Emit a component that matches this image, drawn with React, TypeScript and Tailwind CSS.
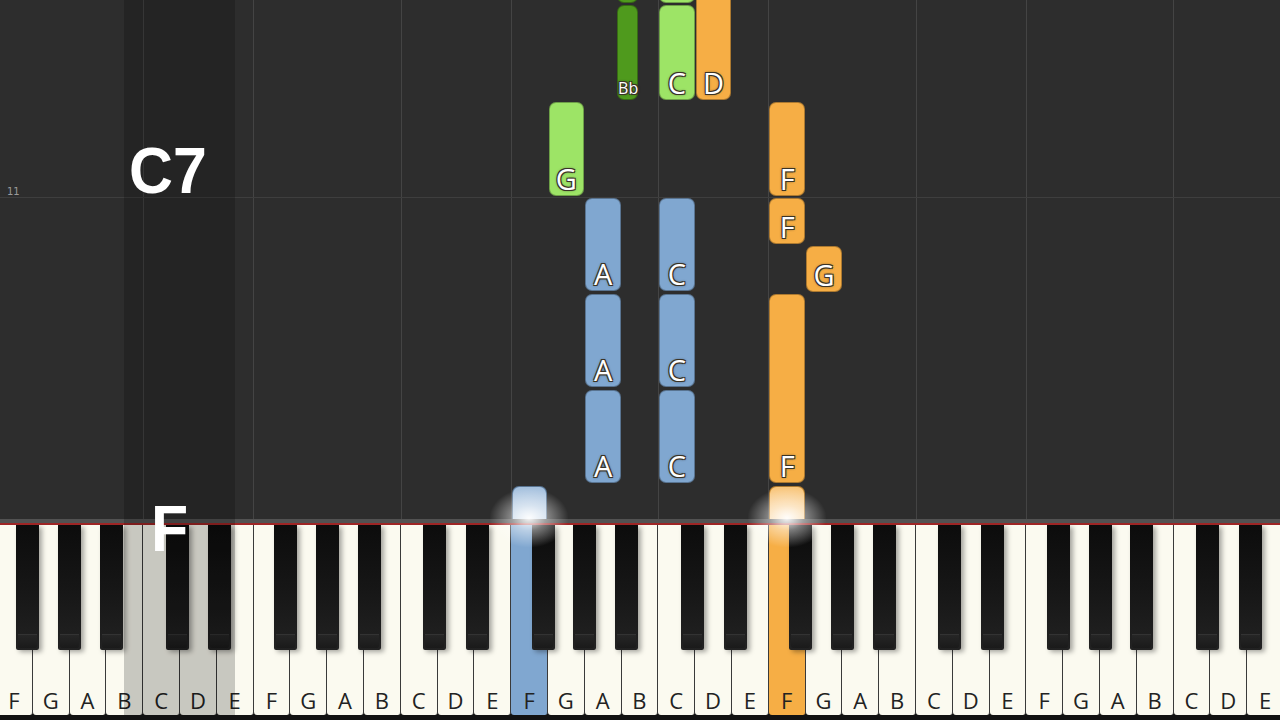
const KW = 36.8;
const X0 = -4;
const keyLeft = (i: number) => X0 + i * KW;

const WHITE = "FGABCDE".repeat(5).split("");
// black key offset from the boundary after a white key
const BLACK_OFFSET: Record<string, number> = { F: -5, G: 0, A: 5, C: -3, D: 3 };

const noteColor = {
  blue: "bg-[#80a7d0]",
  green: "bg-[#9de466]",
  dark: "bg-[#4f9a1d]",
  orange: "bg-[#f6ae45]",
};

type Note = {
  left: number;
  width: number;
  top: number;
  bottom: number;
  color: keyof typeof noteColor;
  label: string;
  small?: boolean;
  glow?: boolean;
};

const white = (k: number, top: number, bottom: number, color: keyof typeof noteColor, label: string, glow?: boolean): Note => ({
  left: keyLeft(k) + 0.5,
  width: KW - 1,
  top,
  bottom,
  color,
  label,
  glow,
});

const bbLeft = keyLeft(17) + 6 - 10.5;

const notes: Note[] = [
  white(15, 102, 196, "green", "G"),
  white(16, 198, 291, "blue", "A"),
  white(16, 294, 387, "blue", "A"),
  white(16, 390, 483, "blue", "A"),
  white(18, 198, 291, "blue", "C"),
  white(18, 294, 387, "blue", "C"),
  white(18, 390, 483, "blue", "C"),
  white(18, 5, 100, "green", "C"),
  white(18, -40, 3, "green", ""),
  white(19, -40, 100, "orange", "D"),
  white(21, 102, 196, "orange", "F"),
  white(21, 198, 244, "orange", "F"),
  white(21, 294, 483, "orange", "F"),
  white(21, 486, 560, "orange", "", true),
  white(22, 246, 292, "orange", "G"),
  white(14, 486, 560, "blue", "", true),
  { left: bbLeft, width: 21, top: 5, bottom: 100, color: "dark", label: "Bb", small: true },
  { left: bbLeft, width: 21, top: -40, bottom: 3, color: "dark", label: "Bb", small: true },
];

const gridX = [143, 253, 401, 511, 658, 768, 916, 1026, 1173];

const outline =
  "[text-shadow:1px_1px_0_#3a3326,-1px_-1px_0_#3a3326,1px_-1px_0_#3a3326,-1px_1px_0_#3a3326,0_0_3px_#222]";

function RollNote({ n }: { n: Note }) {
  return (
    <div
      className={`absolute rounded-[7px] border border-black/30 ${noteColor[n.color]}`}
      style={{ left: n.left, width: n.width, top: n.top, height: n.bottom - n.top }}
    >
      {n.glow && (
        <div className="absolute inset-0 rounded-[7px] bg-gradient-to-b from-white/30 to-white/80" />
      )}
      {n.label && (
        <span
          className={`absolute inset-x-0 text-center font-['Open_Sans',sans-serif] leading-none text-white ${outline} ${
            n.small ? "bottom-[3px] text-[16px]" : "bottom-[2px] text-[29px]"
          }`}
        >
          {n.label}
        </span>
      )}
    </div>
  );
}

function Keyboard() {
  const blacks: { left: number }[] = [];
  WHITE.forEach((w, i) => {
    if (i < WHITE.length - 1 && w in BLACK_OFFSET) {
      blacks.push({ left: keyLeft(i + 1) + BLACK_OFFSET[w] - 11.5 });
    }
  });

  return (
    <div className="relative h-[190px] overflow-hidden bg-[#111]">
      <div className="ml-[-4px] flex h-full">
        {WHITE.map((w, i) => {
          const bg = i === 14 ? "bg-[#80a7d0]" : i === 21 ? "bg-[#f6ae45]" : "bg-[#fbfaf0]";
          return (
            <div
              key={i}
              className={`flex h-full w-[36.8px] shrink-0 items-end justify-center rounded-b-[3px] border-r border-[#3a3a3a] pb-[4px] ${bg}`}
            >
              <span className="font-['Open_Sans',sans-serif] text-[22px] leading-none text-[#222]">{w}</span>
            </div>
          );
        })}
      </div>
      {blacks.map((b, i) => (
        <div
          key={i}
          className="absolute top-0 h-[125px] w-[23px] rounded-b-[2px] bg-gradient-to-b from-[#0c0c0c] via-[#161616] to-[#222] shadow-[3px_2px_5px_rgba(0,0,0,0.35)]"
          style={{ left: b.left }}
        >
          <div className="absolute inset-x-[2px] bottom-[2px] h-[14px] rounded-b-[2px] border-t border-[#333] bg-gradient-to-b from-[#262626] to-[#1a1a1a]" />
        </div>
      ))}
    </div>
  );
}

export default function App() {
  return (
    <div className="relative flex h-[720px] w-[1280px] flex-col overflow-hidden bg-[#2d2d2d]">
      <div className="relative h-[519px] overflow-hidden">
        {gridX.map((x) => (
          <div key={x} className="absolute top-0 h-full w-px bg-[#444]" style={{ left: x }} />
        ))}
        <div className="absolute left-0 top-[197px] h-px w-full bg-[#3e3e3e]" />
        <span className="absolute left-[7px] top-[184px] font-['DejaVu_Sans',sans-serif] text-[10px] text-[#9a9a9a]">11</span>
        {notes.map((n, i) => (
          <RollNote key={i} n={n} />
        ))}
      </div>
      <div className="h-[4px] bg-[#525252]" />
      <div className="h-[2px] bg-[#9e2525]" />
      <Keyboard />
      <div className="h-[5px] bg-[#121212]" />

      {/* highlighted region */}
      <div className="pointer-events-none absolute left-[124px] top-0 h-[715px] w-[111px] bg-black/20" />

      {/* key hit glows */}
      <div className="pointer-events-none absolute left-[489px] top-[488px] h-[60px] w-[80px] bg-[radial-gradient(ellipse_at_center,rgba(255,255,255,0.95)_0%,rgba(255,255,255,0.45)_30%,rgba(255,255,255,0)_70%)]" />
      <div className="pointer-events-none absolute left-[747px] top-[488px] h-[60px] w-[80px] bg-[radial-gradient(ellipse_at_center,rgba(255,255,255,0.95)_0%,rgba(255,255,255,0.45)_30%,rgba(255,255,255,0)_70%)]" />

      <span className="absolute left-[129px] top-[139px] origin-left scale-x-95 font-['Liberation_Sans',Arial,sans-serif] text-[64px] font-bold leading-none text-white">
        C7
      </span>
      <span className="absolute left-[151px] top-[497px] origin-left scale-x-95 font-['Liberation_Sans',Arial,sans-serif] text-[64px] font-bold leading-none text-white">
        F
      </span>
    </div>
  );
}
